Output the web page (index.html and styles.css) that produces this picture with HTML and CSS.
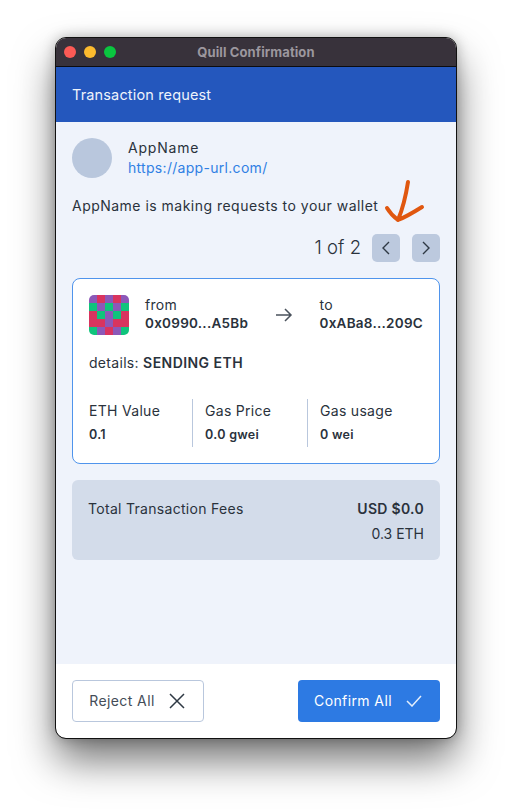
FILE: index.html
```html
<!DOCTYPE html>
<html lang="en">
<head>
    <meta charset="UTF-8">
    <title>Quill Confirmation</title>
    <link rel="stylesheet" href="styles.css">
</head>
<body>
    <div class="window">
        <div class="titlebar">
            <div class="lights">
                <span class="light red"></span>
                <span class="light yellow"></span>
                <span class="light green"></span>
            </div>
            <div class="title">Quill Confirmation</div>
        </div>
        <div class="header">Transaction request</div>
        <div class="content">
            <div class="app">
                <div class="avatar"></div>
                <div>
                    <div class="app-name">AppName</div>
                    <a class="app-url">https://app-url.com/</a>
                </div>
            </div>
            <div class="request-text">AppName is making requests to your wallet</div>
            <div class="pager">
                <span class="pager-count">1 of 2</span>
                <button class="pager-btn">
                    <svg width="10" height="16" viewBox="0 0 10 16"><path d="M8 2 2 8l6 6" /></svg>
                </button>
                <button class="pager-btn">
                    <svg width="10" height="16" viewBox="0 0 10 16"><path d="M2 2l6 6-6 6" /></svg>
                </button>
            </div>
            <div class="card">
                <div class="parties">
                    <div class="identicon">
                        <i class="p"></i><i class="r"></i><i class="p"></i><i class="r"></i><i class="p"></i>
                        <i class="g"></i><i class="p"></i><i class="g"></i><i class="p"></i><i class="g"></i>
                        <i class="r"></i><i class="g"></i><i class="p"></i><i class="g"></i><i class="r"></i>
                        <i class="r"></i><i class="r"></i><i class="p"></i><i class="r"></i><i class="r"></i>
                        <i class="g"></i><i class="p"></i><i class="r"></i><i class="p"></i><i class="g"></i>
                    </div>
                    <div class="party from">
                        <div>from</div>
                        <b>0x0990...A5Bb</b>
                    </div>
                    <svg class="party-arrow" width="18" height="14" viewBox="0 0 18 14"><path d="M1 7h15M10 1l6 6-6 6" /></svg>
                    <div class="party">
                        <div>to</div>
                        <b>0xABa8...209C</b>
                    </div>
                </div>
                <div class="details">details: <b>SENDING ETH</b></div>
                <div class="stats">
                    <div class="stat">
                        <div>ETH Value</div>
                        <b>0.1</b>
                    </div>
                    <div class="stat">
                        <div>Gas Price</div>
                        <b>0.0 gwei</b>
                    </div>
                    <div class="stat">
                        <div>Gas usage</div>
                        <b>0 wei</b>
                    </div>
                </div>
            </div>
            <div class="fees">
                <div>Total Transaction Fees</div>
                <div class="fees-right">
                    <b>USD $0.0</b>
                    <div>0.3 ETH</div>
                </div>
            </div>
            <!-- annotation drawn over the screenshot -->
            <svg class="annotation" width="44" height="48" viewBox="0 0 44 48"><path d="M27 4C25 17 22 30 17 42 13 39 9 35 6 30M17 42C25 39 33 34 41 29" /></svg>
        </div>
        <div class="footer">
            <button class="btn reject">Reject All
                <svg width="16" height="16" viewBox="0 0 16 16"><path d="M1 1l14 14M15 1 1 15" /></svg>
            </button>
            <button class="btn confirm">Confirm All
                <svg width="16" height="12" viewBox="0 0 16 12"><path d="M1 6l5 5 9-10" /></svg>
            </button>
        </div>
    </div>
</body>
</html>
```

FILE: styles.css
```css
* { box-sizing: border-box; }
html, body { margin: 0; height: 100%; }
body { padding: 38px 0 0 56px; background: #fff; overflow: hidden; font-family: Inter, "Liberation Sans", sans-serif; color: #2a323c; }
b { font-weight: 600; }

.window { width: 400px; height: 700px; display: flex; flex-direction: column; border-radius: 10px; overflow: hidden; outline: 1px solid #111; box-shadow: 0 22px 40px rgba(0, 0, 0, 0.55), 0 0 14px rgba(0, 0, 0, 0.3); background: #fff; }

.titlebar { height: 29px; flex: none; display: flex; align-items: center; position: relative; background: #38323b; border-bottom: 1px solid #0c0c0e; }
.lights { display: flex; gap: 8px; padding-left: 8px; }
.light { width: 12px; height: 12px; border-radius: 50%; }
.red { background: #fc5a55; }
.yellow { background: #fdbb2e; }
.green { background: #0ac63f; }
.title { position: absolute; left: 0; right: 0; text-align: center; font-size: 13px; font-weight: 700; letter-spacing: 0.1px; color: #9c979e; }

.header { height: 55px; flex: none; display: flex; align-items: center; padding-left: 16px; background: #2457bd; color: #eef3fb; font-size: 14.5px; font-weight: 400; letter-spacing: 0.15px; }

.content { flex: 1; position: relative; padding: 16px; background: #eff3fb; font-size: 14px; letter-spacing: 0.3px; }
.app { display: flex; align-items: center; gap: 16px; height: 40px; }
.avatar { width: 40px; height: 40px; border-radius: 50%; background: #b9c7dd; }
.app-name { line-height: 20px; letter-spacing: 0.8px; }
.app-url { display: block; line-height: 20px; color: #2f80e4; }
.request-text { margin-top: 18px; line-height: 20px; letter-spacing: 0.48px; }

.pager { display: flex; align-items: center; justify-content: flex-end; gap: 12px; margin-top: 18px; height: 28px; }
.pager-count { font-size: 18.5px; font-weight: 300; letter-spacing: 0; padding-bottom: 2px; margin-right: -1px; }
.pager-btn { width: 28px; height: 28px; padding: 0; border: 0; border-radius: 5px; background: #bcc9de; display: flex; align-items: center; justify-content: center; }
.pager-btn path { fill: none; stroke: #2f3944; stroke-width: 1.4; }

.card { margin-top: 16px; height: 186px; padding: 16px; background: #fff; border: 1px solid #4f94ec; border-radius: 8px; }
.parties { display: flex; align-items: center; height: 40px; }
.identicon { width: 40px; height: 40px; flex: none; display: grid; grid-template-columns: repeat(5, 8px); border-radius: 5px; overflow: hidden; }
.identicon i { display: block; height: 8px; }
.identicon .p { background: #8c58b8; }
.identicon .r { background: #d9345f; }
.identicon .g { background: #10c47c; }
.party { line-height: 19px; margin-top: -2px; }
.party div { margin-top: -1px; }
.party b { display: block; font-size: 13.5px; letter-spacing: 0.25px; }
.from { margin-left: 16px; width: 130px; }
.party-arrow { margin-right: 27px; flex: none; }
.party-arrow path { fill: none; stroke: #4a525c; stroke-width: 1.5; }

.details { margin-top: 18px; line-height: 20px; }
.details b { letter-spacing: 0.45px; }

.stats { display: flex; margin-top: 26px; }
.stat { width: 103px; height: 48px; padding-top: 2px; line-height: 20px; }
.stat + .stat { width: 115px; border-left: 1px solid #b9c7dd; padding-left: 12px; }
.stat b { display: block; margin-top: 4px; font-size: 12.5px; }

.fees { display: flex; justify-content: space-between; height: 80px; margin-top: 16px; padding: 19px 16px; background: #d3dcea; border-radius: 6px; line-height: 20px; }
.fees-right { text-align: right; }
.fees-right div { margin-top: 5px; letter-spacing: 0; }

.annotation { position: absolute; left: 325px; top: 56px; }
.annotation path { fill: none; stroke: #e0570f; stroke-width: 4; stroke-linecap: round; stroke-linejoin: round; }

.footer { height: 74px; flex: none; display: flex; justify-content: space-between; padding: 16px; background: #fff; }
.btn { height: 42px; padding: 0 2px 2px 0; display: flex; align-items: center; justify-content: center; gap: 14px; border-radius: 4px; font: inherit; font-size: 14px; letter-spacing: 0.4px; }
.btn svg { margin-top: 2px; }
.btn svg path { fill: none; stroke-width: 1.5; }
.reject { width: 132px; background: #fff; border: 1px solid #b9c7dd; color: #444d58; }
.reject path { stroke: #2f3944; }
.confirm { width: 142px; background: #2d7ae3; border: 0; color: #fff; }
.confirm path { stroke: #e3eefc; }
```
